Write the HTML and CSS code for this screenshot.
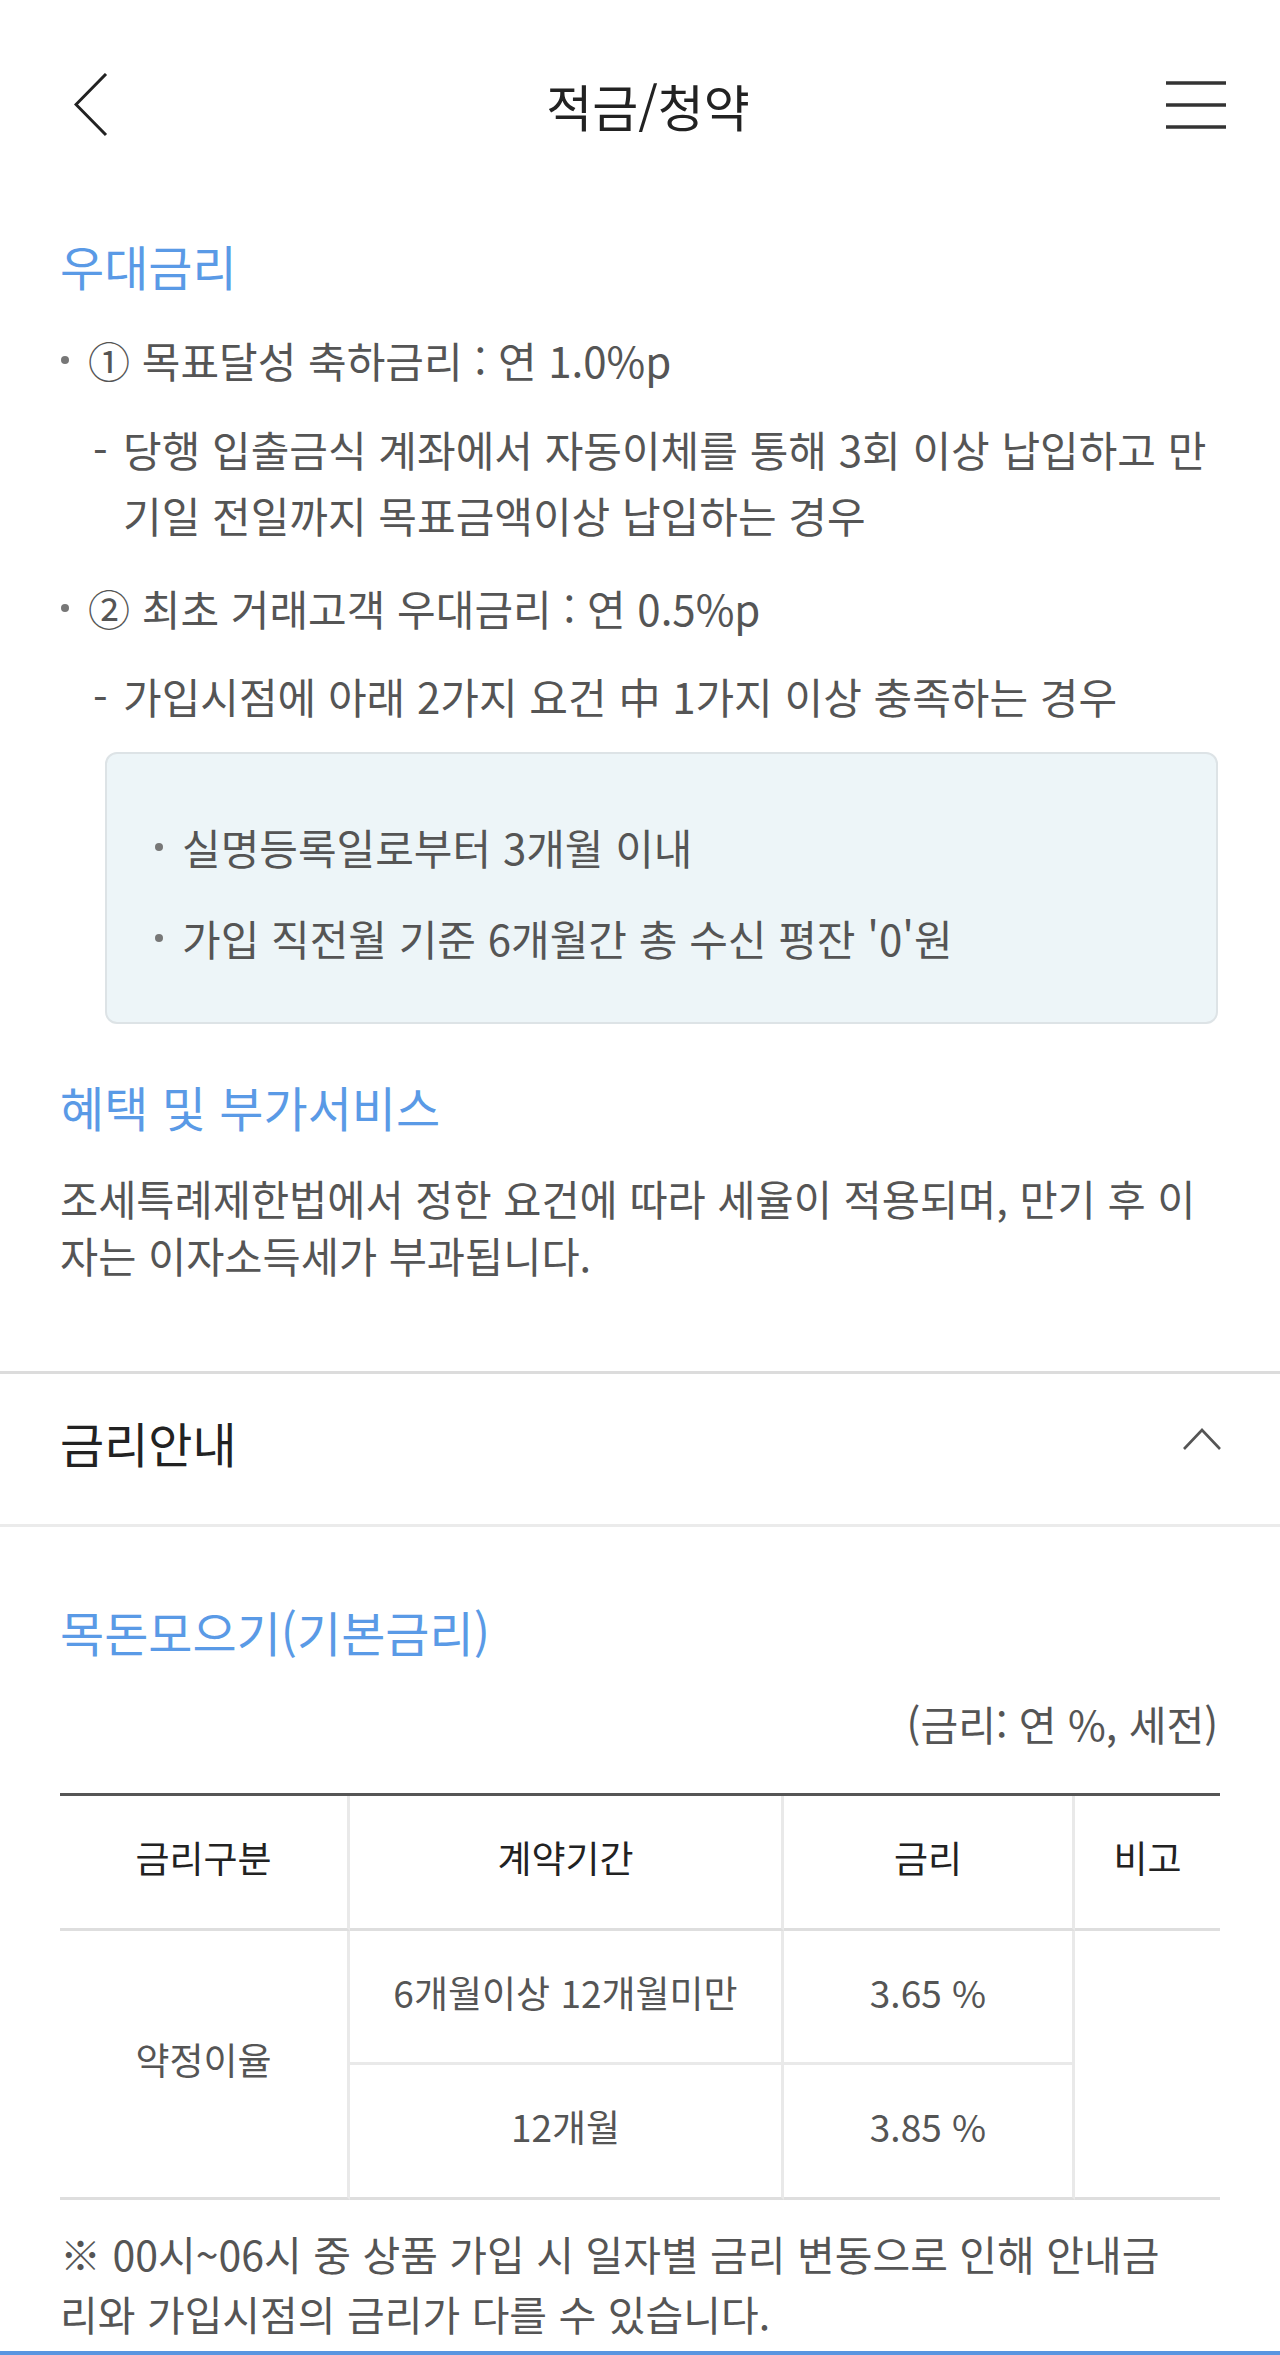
FILE: index.html
```html
<!DOCTYPE html>
<html lang="ko">
<head>
<meta charset="utf-8">
<title>적금/청약</title>
<link rel="stylesheet" href="styles.css">
</head>
<body>
<header class="topbar">
  <button class="icon-btn back" aria-label="뒤로">
    <svg width="34" height="64" viewBox="0 0 34 64"><polyline points="32,1 2,31.5 32,62" fill="none" stroke="#222" stroke-width="3" stroke-linejoin="miter"/></svg>
  </button>
  <h1 class="page-title">적금/청약</h1>
  <button class="icon-btn menu" aria-label="메뉴">
    <svg width="60" height="48" viewBox="0 0 60 48"><g stroke="#333" stroke-width="3.5"><line x1="0" y1="2" x2="60" y2="2"/><line x1="0" y1="24" x2="60" y2="24"/><line x1="0" y1="46" x2="60" y2="46"/></g></svg>
  </button>
</header>

<main>
  <section class="content">
    <h2 class="sec-title first">우대금리</h2>
    <ul class="rules">
      <li class="bullet"><span class="dot"></span><span>① 목표달성 축하금리 : 연 1.0%p</span></li>
      <li class="dash"><span class="dash-mark">-</span><span class="nowrap">당행 입출금식 계좌에서 자동이체를 통해 3회 이상 납입하고 만<br>기일 전일까지 목표금액이상 납입하는 경우</span></li>
      <li class="bullet gap2"><span class="dot"></span><span>② 최초 거래고객 우대금리 : 연 0.5%p</span></li>
      <li class="dash gap3"><span class="dash-mark">-</span><span>가입시점에 아래 2가지 요건 中 1가지 이상 충족하는 경우</span></li>
    </ul>
    <ul class="cond-box">
      <li><span class="dot"></span><span>실명등록일로부터 3개월 이내</span></li>
      <li><span class="dot"></span><span>가입 직전월 기준 6개월간 총 수신 평잔 '0'원</span></li>
    </ul>

    <h2 class="sec-title second">혜택 및 부가서비스</h2>
    <p class="para nowrap">조세특례제한법에서 정한 요건에 따라 세율이 적용되며, 만기 후 이<br>자는 이자소득세가 부과됩니다.</p>
  </section>

  <div class="divider thick"></div>
  <div class="accordion">
    <span class="acc-title">금리안내</span>
    <svg class="chev" width="40" height="24" viewBox="0 0 40 24"><polyline points="2,22 20,3 38,22" fill="none" stroke="#555" stroke-width="2.6"/></svg>
  </div>
  <div class="divider light"></div>

  <section class="content">
    <h3 class="sec-title third">목돈모으기(기본금리)</h3>
    <p class="unit">(금리: 연 %, 세전)</p>
    <div class="rate-table">
      <div class="cell th">금리구분</div>
      <div class="cell th">계약기간</div>
      <div class="cell th">금리</div>
      <div class="cell th last">비고</div>
      <div class="cell td span2">약정이율</div>
      <div class="cell td r1">6개월이상 12개월미만</div>
      <div class="cell td r1">3.65 %</div>
      <div class="cell td span2 last"></div>
      <div class="cell td r2">12개월</div>
      <div class="cell td r2">3.85 %</div>
    </div>
    <p class="footnote nowrap">※ 00시~06시 중 상품 가입 시 일자별 금리 변동으로 인해 안내금<br>리와 가입시점의 금리가 다를 수 있습니다.</p>
  </section>
  <div class="bottom-bar"></div>
</main>
</body>
</html>
```

FILE: styles.css
```css
* { box-sizing: border-box; }
html, body { margin: 0; padding: 0; }
body {
  width: 1280px;
  background: #fff;
  font-family: "Noto Sans CJK KR", "Noto Sans", sans-serif;
  color: #555;
  overflow: hidden;
}
ul { list-style: none; margin: 0; padding: 0; }
p, h1, h2, h3 { margin: 0; }

.topbar {
  height: 210px;
  display: grid;
  grid-template-columns: 1fr auto 1fr;
  align-items: center;
  padding: 0 54px 0 74px;
}
.icon-btn {
  background: none;
  border: 0;
  padding: 0;
  display: flex;
}
.icon-btn.back { justify-self: start; }
.icon-btn.menu { justify-self: end; }
.page-title {
  font-size: 50px;
  font-weight: 400;
  color: #222;
  line-height: 60px;
  margin-right: 4px;
}

.content { padding: 0 60px; }
.nowrap { white-space: nowrap; }

.sec-title {
  font-size: 48px;
  font-weight: 400;
  line-height: 60px;
  color: #5a9ae6;
}
.sec-title.first { margin-top: 25px; }
.sec-title.second { margin-top: 52px; }
.sec-title.third { margin-top: 74px; }

.rules {
  margin-top: 32px;
  font-size: 42px;
  line-height: 66px;
}
.rules li + li { margin-top: 23px; }
.rules li.gap2 { margin-top: 27px; }
.rules li.gap3 { margin-top: 22px; }
.bullet { display: flex; align-items: center; }
.dot {
  flex: none;
  width: 8px;
  height: 8px;
  border-radius: 50%;
  background: #777;
}
.bullet .dot { margin: 0 19px 0 1px; }
.dash { display: flex; padding-left: 33px; }
.dash-mark { flex: none; width: 30px; }

.cond-box {
  margin: 23px 2px 0 45px;
  border: 2px solid #dde3e6;
  border-radius: 12px;
  background: #edf5f8;
  padding: 63px 0 54px 48px;
  font-size: 42px;
  line-height: 60px;
}
.cond-box li { display: flex; align-items: center; }
.cond-box li + li { margin-top: 31px; }
.cond-box .dot { margin-right: 19px; }

.para {
  margin-top: 34px;
  font-size: 41.5px;
  line-height: 57px;
}

.divider { width: 100%; }
.divider.thick { height: 3px; background: #dcdcdc; margin-top: 87px; }
.divider.light { height: 3px; background: #ebebeb; }

.accordion {
  height: 150px;
  display: flex;
  align-items: center;
  justify-content: space-between;
  padding: 0 58px 14px 60px;
}
.acc-title {
  font-size: 48px;
  line-height: 60px;
  color: #222;
}
.chev { margin-top: -6px; }

.unit {
  margin-top: 37px;
  text-align: right;
  font-size: 41px;
  line-height: 50px;
  padding-right: 2px;
}

.rate-table {
  margin-top: 45px;
  border-top: 3px solid #555;
  display: grid;
  grid-template-columns: 290px 434px 291px 1fr;
  grid-template-rows: 135px 134px 135px;
  font-size: 37px;
}
.cell {
  display: flex;
  align-items: center;
  justify-content: center;
  padding-bottom: 10px;
  border-right: 3px solid #e9e9e9;
  border-bottom: 3px solid #dedede;
  color: #555;
}
.cell.last { border-right: 0; }
.cell.th { color: #222; }
.cell.span2 { grid-row: span 2; }
.cell.td.r1 { border-bottom-color: #e9e9e9; }

.footnote {
  margin-top: 23px;
  font-size: 41px;
  line-height: 60px;
}

.bottom-bar {
  margin-top: 8px;
  height: 4px;
  background: #5a95e0;
}
```
